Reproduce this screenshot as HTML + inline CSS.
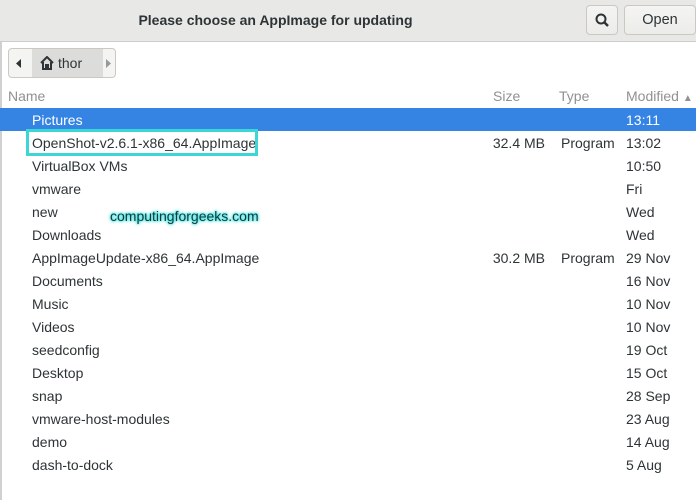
<!DOCTYPE html><html><head><style>
body{margin:0;width:696px;height:500px;overflow:hidden;background:#fff;font-family:"Liberation Sans",sans-serif;font-size:14px;color:#2e3436;position:relative}
.hb{position:absolute;left:0;top:0;width:696px;height:41px;background:#e8e8e7;border-bottom:1px solid #cdcdcb}
.title{position:absolute;left:0;width:551px;top:12px;text-align:center;font-weight:bold;font-size:14px;color:#2e3436}
.btn{position:absolute;top:5px;height:30px;border:1px solid #cdc7c2;border-radius:4px;background:linear-gradient(#f4f4f3,#ececea);box-sizing:border-box}
.lb{position:absolute;left:0;top:42px;width:2px;height:458px;background:#d0d0d0}
.path{position:absolute;left:8px;top:48px;width:108px;height:30px;border:1px solid #cdc7c2;border-radius:4px;box-sizing:border-box;background:#f4f4f3;overflow:hidden}
.path .mid{position:absolute;left:23px;top:0;width:71px;height:28px;background:#dcdcda}
.r{position:absolute;left:0;width:696px;height:23px;line-height:23px}
.r span{position:absolute;top:1px}
.n{left:32px}.s{right:151px}.t{left:561px}.m{left:626px}
.sel{background:#3584e4;color:#fff}
.h{position:absolute;top:88px;color:#919191;font-size:14px}
</style></head><body>
<div class="hb"><div class="title">Please choose an AppImage for updating</div>
<div class="btn" style="left:586px;width:32px"><svg width="30" height="28" viewBox="0 0 30 28"><circle cx="14" cy="13" r="4.5" fill="none" stroke="#2e3436" stroke-width="2"/><path d="M17 16l4 4" stroke="#2e3436" stroke-width="2.5"/></svg></div>
<div class="btn" style="left:624px;width:72px;text-align:center;line-height:28px;font-size:14.5px">Open</div></div>
<div class="lb"></div>
<div class="path"><svg style="position:absolute;left:7px;top:10px" width="6" height="9"><path d="M5 0v9L0 4.5z" fill="#2e3436"/></svg><div class="mid"><svg style="position:absolute;left:7px;top:7px" width="16" height="14" viewBox="0 0 16 14"><path d="M2 7L8 1l6 6M4 6v7h3V9h2v4h3V6" fill="none" stroke="#2e3436" stroke-width="2"/></svg><span style="position:absolute;left:26px;top:6px;color:#2e3436">thor</span></div><svg style="position:absolute;left:97px;top:10px" width="6" height="9"><path d="M0 0v9l5-4.5z" fill="#999"/></svg></div>
<div class="h" style="left:8px">Name</div><div class="h" style="left:493px">Size</div><div class="h" style="left:559px">Type</div><div class="h" style="left:626px">Modified <span style="font-size:10px">▲</span></div>
<div class="r sel" style="top:108px"><span class="n">Pictures</span><span class="m">13:11</span></div>
<div class="r" style="top:131px"><span class="n">OpenShot-v2.6.1-x86_64.AppImage</span><span class="s">32.4 MB</span><span class="t">Program</span><span class="m">13:02</span></div>
<div style="position:absolute;left:26px;top:129px;width:226px;height:21px;border:3px solid #3dd6d6"></div>
<div class="r" style="top:154px"><span class="n">VirtualBox VMs</span><span class="m">10:50</span></div>
<div class="r" style="top:177px"><span class="n">vmware</span><span class="m">Fri</span></div>
<div class="r" style="top:200px"><span class="n">new</span><span class="m">Wed</span></div>
<div class="r" style="top:223px"><span class="n">Downloads</span><span class="m">Wed</span></div>
<div class="r" style="top:246px"><span class="n">AppImageUpdate-x86_64.AppImage</span><span class="s">30.2 MB</span><span class="t">Program</span><span class="m">29 Nov</span></div>
<div class="r" style="top:269px"><span class="n">Documents</span><span class="m">16 Nov</span></div>
<div class="r" style="top:292px"><span class="n">Music</span><span class="m">10 Nov</span></div>
<div class="r" style="top:315px"><span class="n">Videos</span><span class="m">10 Nov</span></div>
<div class="r" style="top:338px"><span class="n">seedconfig</span><span class="m">19 Oct</span></div>
<div class="r" style="top:361px"><span class="n">Desktop</span><span class="m">15 Oct</span></div>
<div class="r" style="top:384px"><span class="n">snap</span><span class="m">28 Sep</span></div>
<div class="r" style="top:407px"><span class="n">vmware-host-modules</span><span class="m">23 Aug</span></div>
<div class="r" style="top:430px"><span class="n">demo</span><span class="m">14 Aug</span></div>
<div class="r" style="top:453px"><span class="n">dash-to-dock</span><span class="m">5 Aug</span></div>
<div style="position:absolute;left:110px;top:208px;font-size:14px;color:#0d3a3a;text-shadow:0 0 3px #3ee0e0,0 0 3px #3ee0e0,0 0 2px #3ee0e0">computingforgeeks.com</div>
</body></html>
